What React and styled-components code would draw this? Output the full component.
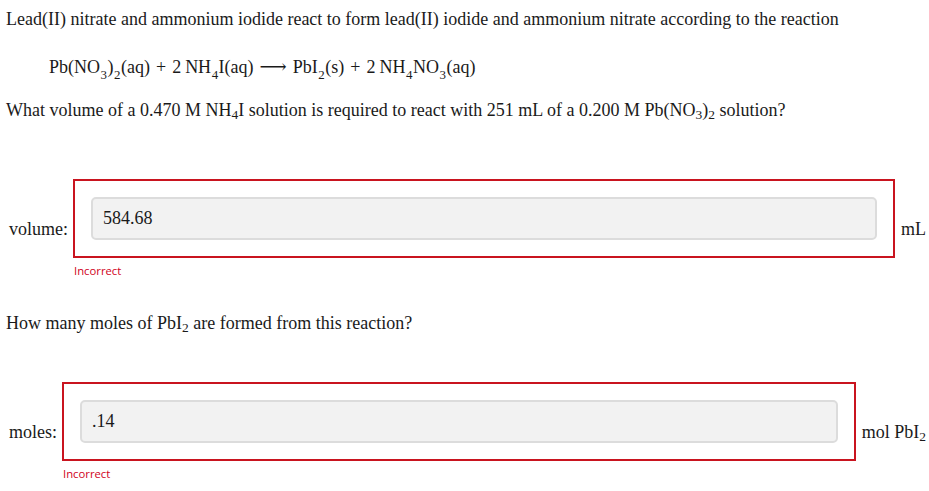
import React from "react";
import styled, { createGlobalStyle } from "styled-components";

const Global = createGlobalStyle`
  html, body { margin: 0; padding: 0; background: #fff; }
  body { font-family: "Liberation Serif", "Times New Roman", serif; color: #1a1a1a; }
`;

const Page = styled.div`
  width: 929px;
  padding: 8px 3px 0 6px;
  box-sizing: border-box;
  font-size: 18px;
`;

const Para = styled.p`
  margin: ${(p) => p.$mt || 0}px 0 ${(p) => p.$mb || 0}px 0;
  line-height: 22px;
  white-space: nowrap;
`;

const Sub = styled.sub`
  font-size: 0.75em;
  vertical-align: -0.25em;
  line-height: 0;
`;

const Equation = styled.div`
  margin: 0 0 19px 43px;
  line-height: 22px;
  white-space: nowrap;
`;

const MSub = styled.span`
  font-size: 0.72em;
  position: relative;
  top: 0.45em;
  margin: 0 0.5px;
`;

const Op = styled.span`
  padding: 0 ${(p) => p.$pad || 6}px;
`;

const Arrow = styled.span`
  font-family: "DejaVu Serif", serif;
  padding: 0 6px;
  font-size: 19px;
`;

const Row = styled.div`
  display: flex;
  align-items: center;
  padding-left: 3px;
  margin-top: ${(p) => p.$mt}px;
`;

const Label = styled.div`
  flex: none;
  margin-right: 5px;
  white-space: nowrap;
`;

const Field = styled.div`
  flex: 1;
  display: flex;
  flex-direction: column;
`;

const Frame = styled.div`
  border: 2px solid #c9141f;
  padding: 16px;
`;

const Input = styled.div`
  height: 43px;
  box-sizing: border-box;
  border: 2px solid #dcdcdc;
  border-radius: 5px;
  background: #f2f2f2;
  padding-left: 10px;
  display: flex;
  align-items: center;
  font-family: "Liberation Serif", "Times New Roman", serif;
  font-size: 18px;
  color: #1a1a1a;
`;

const Feedback = styled.div`
  font-family: "Open Sans", "Noto Sans", sans-serif;
  font-size: 11.3px;
  color: #d0021b;
  line-height: 16px;
  margin: 5px 0 0 1px;
`;

const Unit = styled.div`
  flex: none;
  margin-left: 6px;
  white-space: nowrap;
`;

export default function App() {
  return (
    <Page>
      <Global />
      <Para $mb={25}>
        Lead(II) nitrate and ammonium iodide react to form lead(II) iodide and ammonium nitrate according to the reaction
      </Para>
      <Equation>
        Pb(NO<MSub>3</MSub>)<MSub>2</MSub>(aq)<Op>+</Op>2<Op $pad={2} />NH<MSub>4</MSub>I(aq)
        <Arrow>⟶</Arrow>PbI<MSub>2</MSub>(s)<Op>+</Op>2<Op $pad={2} />NH<MSub>4</MSub>NO<MSub>3</MSub>(aq)
      </Equation>
      <Para>
        What volume of a 0.470 M NH<Sub>4</Sub>I solution is required to react with 251 mL of a 0.200 M Pb(NO<Sub>3</Sub>)<Sub>2</Sub> solution?
      </Para>
      <Row $mt={58}>
        <Label>volume:</Label>
        <Field>
          <Frame>
            <Input>584.68</Input>
          </Frame>
          <Feedback>Incorrect</Feedback>
        </Field>
        <Unit>mL</Unit>
      </Row>
      <Para $mt={33}>
        How many moles of PbI<Sub>2</Sub> are formed from this reaction?
      </Para>
      <Row $mt={48}>
        <Label>moles:</Label>
        <Field>
          <Frame>
            <Input>.14</Input>
          </Frame>
          <Feedback>Incorrect</Feedback>
        </Field>
        <Unit>
          mol PbI<Sub>2</Sub>
        </Unit>
      </Row>
    </Page>
  );
}
